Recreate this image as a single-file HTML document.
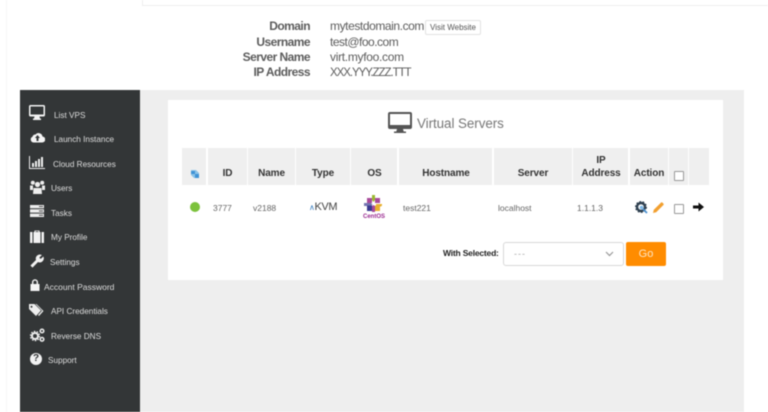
<!DOCTYPE html>
<html><head><meta charset="utf-8">
<style>
html,body{margin:0;padding:0;background:#fff}
#p{position:relative;width:768px;height:412px;overflow:hidden;background:#fff;font-family:"Liberation Sans",sans-serif;filter:blur(.5px)}
.a{position:absolute;white-space:nowrap}
.lb{font-size:12px;font-weight:bold;color:#5c5c5c;text-align:right;right:458px;line-height:14px;letter-spacing:-.55px}
.v{font-size:12px;color:#5c5c5c;left:330px;line-height:14px}
.m{color:#ddd;font-size:8.2px;line-height:12px;font-weight:normal;margin-top:1px}
.i{position:absolute}
.th{position:absolute;top:148px;height:37px;background:#efefef}
.h{font-size:10px;font-weight:bold;color:#333;text-align:center;line-height:13px;position:absolute;letter-spacing:-.1px}
.c{font-size:8.5px;color:#666;line-height:12px}
.cb{position:absolute;width:8px;height:8px;border:1px solid #999;background:#fff;border-radius:1px}
</style></head><body><div id="p">
<div class="a" style="left:6px;top:0;width:1px;height:412px;background:#f6f6f6"></div>
<div class="a" style="left:142px;top:0;width:626px;height:5px;border-left:1px solid #eee;border-bottom:1px solid #eee"></div>

<div class="a lb" style="top:19px">Domain</div>
<div class="a lb" style="top:35px">Username</div>
<div class="a lb" style="top:50px">Server Name</div>
<div class="a lb" style="top:65px">IP Address</div>
<div class="a v" style="top:19px;letter-spacing:-.42px">mytestdomain.com</div>
<div class="a" style="left:425px;top:20px;width:54px;height:13px;border:1px solid #e2e2e2;border-radius:2px;font-size:8px;line-height:14px;text-align:center;color:#555;background:#fff">Visit Website</div>
<div class="a v" style="top:35px;letter-spacing:-.5px">test@foo.com</div>
<div class="a v" style="top:50px;letter-spacing:-.3px">virt.myfoo.com</div>
<div class="a v" style="top:66px;font-size:11.5px;letter-spacing:-1.05px">XXX.YYY.ZZZ.TTT</div>

<div class="a" style="left:140px;top:90px;width:604px;height:322px;background:#eeeeee"></div>
<div class="a" style="left:20px;top:90px;width:120px;height:322px;background:#333637"></div>

<!-- sidebar -->
<svg class="i" style="left:29px;top:105px" width="16" height="15" viewBox="0 0 16 15"><path d="M1.500 0h13A1.500 1.500 0 0 1 16 1.500V10a1.500 1.500 0 0 1-1.500 1.500h-4l.5 2H12V15H4v-1.500h1l.5-2h-4A1.500 1.500 0 0 1 0 10V1.500A1.500 1.500 0 0 1 1.500 0zM1.500 1.500V9.500h13V1.500z" fill="#f2f2f2" fill-rule="evenodd"/></svg>
<div class="a m" style="left:54px;top:109px">List VPS</div>
<svg class="i" style="left:30px;top:131px" width="15" height="12" viewBox="0 0 15 12"><path d="M3.500 11.500A3 3 0 0 1 2.500 5.800 3 3 0 0 1 5.500 3.500 4 4 0 0 1 12.500 5.500 3 3 0 0 1 12 11.500z" fill="#f5f5f5"/><path d="M7.500 4L5 7h1.500v3h2V7H10z" fill="#333637"/></svg>
<div class="a m" style="left:54px;top:133px">Launch Instance</div>
<svg class="i" style="left:29px;top:156px" width="16" height="13" viewBox="0 0 16 13"><path d="M0 0h1v12h15v1H0z" fill="#eee"/><path d="M3 7h2v4H3zM6 5h2v6H6zM9 3h2v8H9zM12 1h2v10h-2z" fill="#eee"/></svg>
<div class="a m" style="left:53px;top:158px">Cloud Resources</div>
<svg class="i" style="left:30px;top:180px" width="15" height="14" viewBox="0 0 15 14"><circle cx="7.500" cy="4.500" r="2.600" fill="#eee"/><circle cx="2.800" cy="2.800" r="2" fill="#eee"/><circle cx="12.200" cy="2.800" r="2" fill="#eee"/><path d="M3.500 8h8l.5 6H3z" fill="#eee"/><path d="M0 5.500h3V10H0zM12 5.500h3V10h-3z" fill="#eee"/></svg>
<div class="a m" style="left:51px;top:182px">Users</div>
<svg class="i" style="left:30px;top:205px" width="14" height="12" viewBox="0 0 14 12"><path d="M0 0h14v3.300H0zM0 4.300h14v3.300H0zM0 8.600h14V12H0z" fill="#eee"/><path d="M9 1h4v1H9zM9 5.500h4v1H9zM9 9.800h4v1H9z" fill="#555"/></svg>
<div class="a m" style="left:51px;top:207px">Tasks</div>
<svg class="i" style="left:30px;top:230px" width="14" height="13" viewBox="0 0 14 13"><path d="M4.500 2V.5h5V2H14v11H0V2zM5.500 1.300V2h3v-.7z" fill="#f2f2f2" fill-rule="evenodd"/><path d="M2.500 2h1v11h-1zM10.500 2h1v11h-1z" fill="#333637"/></svg>
<div class="a m" style="left:51px;top:231px">My Profile</div>
<svg class="i" style="left:30px;top:254px" width="14" height="14" viewBox="0 0 14 14"><path d="M1 11.500L6.500 6A3.600 3.600 0 0 1 11.200 1.200L9 3.200l.5 1.500 1.500.5 2.200-2A3.600 3.600 0 0 1 8 7.500L2.500 13z" fill="#f2f2f2" stroke="#f2f2f2" stroke-width=".8"/></svg>
<div class="a m" style="left:50px;top:256px">Settings</div>
<svg class="i" style="left:30px;top:279px" width="10" height="12" viewBox="0 0 10 12"><path d="M2 5V3.200a3 3 0 0 1 6 0V5h1.500v7H.5V5zM3.400 5h3.200V3.200a1.600 1.600 0 0 0-3.200 0z" fill="#f5f5f5" fill-rule="evenodd"/></svg>
<div class="a m" style="left:44px;top:280px;font-size:8.5px">Account Password</div>
<svg class="i" style="left:29px;top:304px" width="15" height="13" viewBox="0 0 15 13"><path d="M0 0h5.500L12 6.500 7 12 0 5zM2.500 1.700a1 1 0 1 0 .01 0z" fill="#eee" fill-rule="evenodd"/><path d="M7.500 0L14.500 7 10 12 9 11 13 6.800 6.500 0z" fill="#eee"/></svg>
<div class="a m" style="left:51px;top:305px">API Credentials</div>
<svg class="i" style="left:30px;top:328px" width="15" height="14" viewBox="0 0 15 14"><circle cx="5" cy="8" r="3" fill="none" stroke="#eee" stroke-width="2"/><circle cx="5" cy="8" r="4.600" fill="none" stroke="#eee" stroke-width="1.200" stroke-dasharray="1.600 1.300"/><circle cx="12" cy="3" r="1.800" fill="none" stroke="#eee" stroke-width="1.500"/><circle cx="12" cy="11.300" r="1.800" fill="none" stroke="#eee" stroke-width="1.500"/></svg>
<div class="a m" style="left:51px;top:330px">Reverse DNS</div>
<div class="a" style="left:30px;top:353px;width:12px;height:12px;border-radius:50%;background:#f2f2f2;color:#333637;font-size:10px;font-weight:bold;line-height:12px;text-align:center">?</div>
<div class="a m" style="left:48px;top:354px">Support</div>

<!-- panel -->
<div class="a" style="left:168px;top:100px;width:555px;height:180px;background:#fff"></div>
<svg class="i" style="left:388px;top:112px" width="24" height="21" viewBox="0 0 24 21"><path d="M2 0h20a2 2 0 0 1 2 2v13a2 2 0 0 1-2 2h-7l.7 2.500H18V21H6v-1.500h2.300L9 17H2a2 2 0 0 1-2-2V2a2 2 0 0 1 2-2zM2 2v11h20V2z" fill="#555" fill-rule="evenodd"/></svg>
<div class="a" style="left:417px;top:115px;font-size:13.4px;line-height:17px;color:#777;letter-spacing:-.05px">Virtual Servers</div>

<!-- table header -->
<div class="th" style="left:182px;width:24px"></div>
<div class="th" style="left:208px;width:39px"></div>
<div class="th" style="left:248px;width:47px"></div>
<div class="th" style="left:296px;width:54px"></div>
<div class="th" style="left:351px;width:46px"></div>
<div class="th" style="left:399px;width:93px"></div>
<div class="th" style="left:494px;width:78px"></div>
<div class="th" style="left:573px;width:55px"></div>
<div class="th" style="left:630px;width:38px"></div>
<div class="th" style="left:669px;width:19px"></div>
<div class="th" style="left:689px;width:20px"></div>

<svg class="i" style="left:190px;top:169px" width="10" height="10" viewBox="0 0 10 10"><path d="M1 1h5l3 3v5H4L1 6z" fill="#8cc3e8"/><path d="M1 2h4v3H1zM5 5h4v4H5z" fill="#3f93d6"/></svg>
<div class="h" style="left:207px;width:41px;top:167px">ID</div>
<div class="h" style="left:248px;width:47px;top:167px">Name</div>
<div class="h" style="left:296px;width:54px;top:167px">Type</div>
<div class="h" style="left:351px;width:47px;top:167px">OS</div>
<div class="h" style="left:399px;width:94px;top:167px">Hostname</div>
<div class="h" style="left:494px;width:78px;top:167px">Server</div>
<div class="h" style="left:573px;width:56px;top:154px">IP<br>Address</div>
<div class="h" style="left:630px;width:38px;top:167px">Action</div>
<div class="cb" style="left:674px;top:171px"></div>

<!-- row -->
<div class="a" style="left:190px;top:202px;width:10px;height:10px;border-radius:50%;background:#7cc23c"></div>
<div class="a c" style="left:213px;top:202px">3777</div>
<div class="a c" style="left:253px;top:202px">v2188</div>
<div class="a" style="left:309px;top:200px;font-size:11px;line-height:14px;color:#444;letter-spacing:-.4px"><span style="color:#3a7fc0;font-size:8px">∧</span>KVM</div>
<svg class="i" style="left:364px;top:195px" width="20" height="18" viewBox="0 0 20 18"><path d="M8 0h3v5L9.500 7 8 5z" fill="#9ab830"/><path d="M11 3h5v5h-5z" fill="#a84a9a"/><path d="M12 9h6v1.500l-1 1h-5z" fill="#e8b030"/><path d="M11 10.500h5V16h-5z" fill="#e8b030"/><path d="M3 3h5v5H3z" fill="#a84a9a"/><path d="M3 10.500h5V16H3z" fill="#3a3a90"/><path d="M0 8h7l1.500 1.500L7 11H0z" fill="#3a3a90" opacity=".7"/><path d="M8 11l1.500-1 1.500 1v6H8z" fill="#a84a9a"/></svg>
<div class="a" style="left:363px;top:214px;font-size:6px;font-weight:bold;line-height:7px;color:#9a2a90">CentOS</div>
<div class="a c" style="left:403px;top:202px">test221</div>
<div class="a c" style="left:498px;top:202px">localhost</div>
<div class="a c" style="left:577px;top:202px">1.1.1.3</div>
<svg class="i" style="left:635px;top:201px" width="13" height="13" viewBox="0 0 13 13"><circle cx="6" cy="6" r="4" fill="none" stroke="#2f4050" stroke-width="2.400"/><circle cx="6" cy="6" r="5.300" fill="none" stroke="#2f4050" stroke-width="1.300" stroke-dasharray="1.800 1.500"/><path d="M8 8l4 4" stroke="#4a90d0" stroke-width="1.800"/><circle cx="6.500" cy="6.500" r="1.800" fill="#7db8e8"/></svg>
<svg class="i" style="left:653px;top:202px" width="11" height="11" viewBox="0 0 11 11"><path d="M0 11l.8-3.200L8 .6a1 1 0 0 1 1.400 0l1 1a1 1 0 0 1 0 1.400L3.200 10.200z" fill="#f2a030"/></svg>
<div class="cb" style="left:674px;top:204px"></div>
<svg class="i" style="left:693px;top:202px" width="11" height="10" viewBox="0 0 11 10"><path d="M0 3.500h5.500V.5L11 5 5.500 9.500v-3H0z" fill="#111"/></svg>

<!-- bottom form -->
<div class="a" style="left:443px;top:248px;font-size:8.5px;font-weight:bold;line-height:11px;color:#222;letter-spacing:-.2px">With Selected:</div>
<div class="a" style="left:503px;top:242px;width:119px;height:22px;border:1px solid #d8d8d8;border-radius:3px;background:#fff"></div>
<div class="a" style="left:514px;top:248px;font-size:9px;line-height:12px;color:#aaa;letter-spacing:1px">---</div>
<svg class="i" style="left:605px;top:251px" width="9" height="6" viewBox="0 0 9 6"><path d="M1 1l3.500 3.500L8 1" fill="none" stroke="#999" stroke-width="1.200"/></svg>
<div class="a" style="left:626px;top:242px;width:40px;height:24px;border-radius:2px;background:#ff8c00;color:#ffe6c4;font-size:11px;line-height:25px;text-align:center">Go</div>
</div></body></html>
